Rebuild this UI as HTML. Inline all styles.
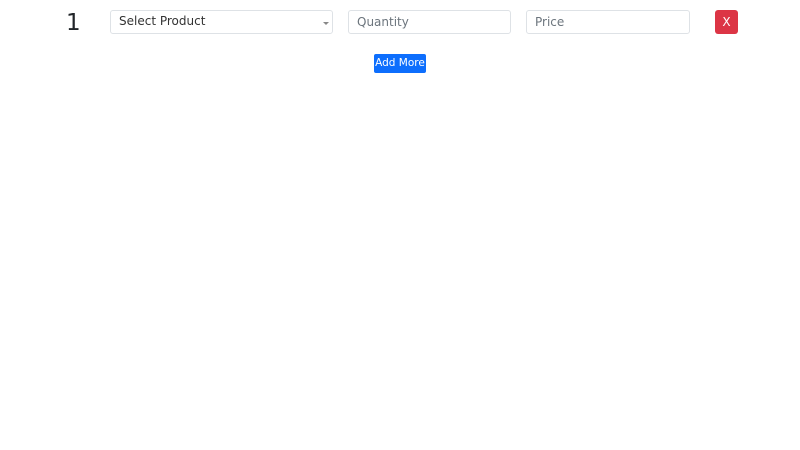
<!DOCTYPE html>
<html><head><style>
body{margin:0;width:800px;height:450px;background:#fff;font-family:"DejaVu Sans",sans-serif;position:relative}
.a{position:absolute;box-sizing:border-box}
.in{border:1px solid #dee2e6;border-radius:3px;font-size:12px;color:#6c757d;padding-left:8px;line-height:22px;height:24px;top:10px}
</style></head><body>
<div class="a" style="left:66px;top:10px;font-size:23px;color:#212529;line-height:26px">1</div>
<div class="a in" style="left:110px;width:223px;color:#333;line-height:20px">Select Product</div>
<div class="a" style="left:323px;top:22px;width:0;height:0;border-left:3px solid transparent;border-right:3px solid transparent;border-top:3px solid #888"></div>
<div class="a in" style="left:348px;width:163px">Quantity</div>
<div class="a in" style="left:526px;width:164px">Price</div>
<div class="a" style="left:715px;top:10px;width:23px;height:24px;background:#dc3545;border-radius:3px;color:#fff;font-size:12px;text-align:center;line-height:24px">X</div>
<div class="a" style="left:374px;top:54px;width:52px;height:19px;background:#0d6efd;border-radius:2px;color:#fff;font-size:10.5px;text-align:center;line-height:19px">Add More</div>
</body></html>
